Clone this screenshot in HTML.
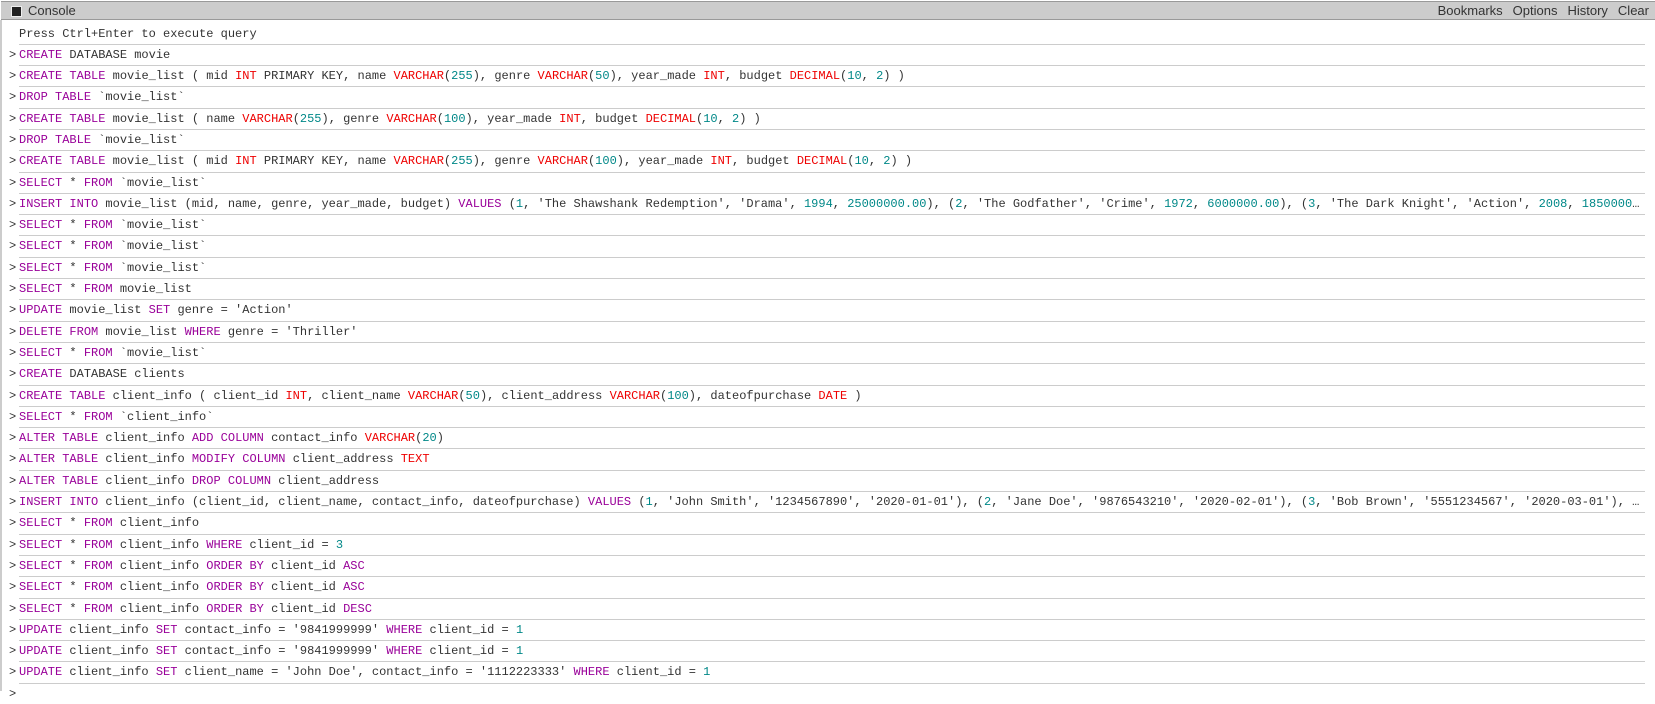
<!DOCTYPE html>
<html><head><meta charset="utf-8"><style>
body{margin:0;width:1655px;height:691px;overflow:hidden;background:#fff;font-family:"Liberation Mono",monospace;}
#bar{position:absolute;left:1px;top:1px;width:1654px;height:17px;background:#ccc;border-top:1px solid #999;border-bottom:1px solid #999;font-family:"Liberation Sans",Arial,sans-serif;font-size:13px;color:#333;}
#bar .ic{position:absolute;left:10px;top:4px;width:9px;height:9px;background:#222;border:1px solid #eee;}
#bar .t{position:absolute;left:27px;top:1px;}
#bar .r{position:absolute;right:6px;top:1px;}
#bar .r span{margin-left:10px;}
#lb{position:absolute;left:0;top:20px;width:2px;height:671px;background:#ccc;}
#rows{position:absolute;left:19px;top:23.5px;width:1626px;}
.row{position:relative;height:20.3px;border-bottom:1px solid #ccc;font-size:12px;line-height:20.3px;color:#333;white-space:pre;}
.row.p:before{content:">";position:absolute;left:-10px;}
.row .in{display:block;overflow:hidden;text-overflow:ellipsis;white-space:pre}
.k{color:#990099}.y{color:#ee0000}.n{color:#008888}
</style></head><body>
<div id="bar"><div class="ic"></div><span class="t">Console</span><span class="r"><span>Bookmarks</span><span>Options</span><span>History</span><span>Clear</span></span></div>
<div id="lb"></div>
<div id="rows">
<div class="row"><span class="in">Press Ctrl+Enter to execute query</span></div>
<div class="row p"><span class="in"><span class="k">CREATE</span> DATABASE movie</span></div>
<div class="row p"><span class="in"><span class="k">CREATE</span> <span class="k">TABLE</span> movie_list ( mid <span class="y">INT</span> PRIMARY KEY, name <span class="y">VARCHAR</span>(<span class="n">255</span>), genre <span class="y">VARCHAR</span>(<span class="n">50</span>), year_made <span class="y">INT</span>, budget <span class="y">DECIMAL</span>(<span class="n">10</span>, <span class="n">2</span>) )</span></div>
<div class="row p"><span class="in"><span class="k">DROP</span> <span class="k">TABLE</span> `movie_list`</span></div>
<div class="row p"><span class="in"><span class="k">CREATE</span> <span class="k">TABLE</span> movie_list ( name <span class="y">VARCHAR</span>(<span class="n">255</span>), genre <span class="y">VARCHAR</span>(<span class="n">100</span>), year_made <span class="y">INT</span>, budget <span class="y">DECIMAL</span>(<span class="n">10</span>, <span class="n">2</span>) )</span></div>
<div class="row p"><span class="in"><span class="k">DROP</span> <span class="k">TABLE</span> `movie_list`</span></div>
<div class="row p"><span class="in"><span class="k">CREATE</span> <span class="k">TABLE</span> movie_list ( mid <span class="y">INT</span> PRIMARY KEY, name <span class="y">VARCHAR</span>(<span class="n">255</span>), genre <span class="y">VARCHAR</span>(<span class="n">100</span>), year_made <span class="y">INT</span>, budget <span class="y">DECIMAL</span>(<span class="n">10</span>, <span class="n">2</span>) )</span></div>
<div class="row p"><span class="in"><span class="k">SELECT</span> * <span class="k">FROM</span> `movie_list`</span></div>
<div class="row p"><span class="in"><span class="k">INSERT</span> <span class="k">INTO</span> movie_list (mid, name, genre, year_made, budget) <span class="k">VALUES</span> (<span class="n">1</span>, 'The Shawshank Redemption', 'Drama', <span class="n">1994</span>, <span class="n">25000000.00</span>), (<span class="n">2</span>, 'The Godfather', 'Crime', <span class="n">1972</span>, <span class="n">6000000.00</span>), (<span class="n">3</span>, 'The Dark Knight', 'Action', <span class="n">2008</span>, <span class="n">185000000.00</span>)</span></div>
<div class="row p"><span class="in"><span class="k">SELECT</span> * <span class="k">FROM</span> `movie_list`</span></div>
<div class="row p"><span class="in"><span class="k">SELECT</span> * <span class="k">FROM</span> `movie_list`</span></div>
<div class="row p"><span class="in"><span class="k">SELECT</span> * <span class="k">FROM</span> `movie_list`</span></div>
<div class="row p"><span class="in"><span class="k">SELECT</span> * <span class="k">FROM</span> movie_list</span></div>
<div class="row p"><span class="in"><span class="k">UPDATE</span> movie_list <span class="k">SET</span> genre = 'Action'</span></div>
<div class="row p"><span class="in"><span class="k">DELETE</span> <span class="k">FROM</span> movie_list <span class="k">WHERE</span> genre = 'Thriller'</span></div>
<div class="row p"><span class="in"><span class="k">SELECT</span> * <span class="k">FROM</span> `movie_list`</span></div>
<div class="row p"><span class="in"><span class="k">CREATE</span> DATABASE clients</span></div>
<div class="row p"><span class="in"><span class="k">CREATE</span> <span class="k">TABLE</span> client_info ( client_id <span class="y">INT</span>, client_name <span class="y">VARCHAR</span>(<span class="n">50</span>), client_address <span class="y">VARCHAR</span>(<span class="n">100</span>), dateofpurchase <span class="y">DATE</span> )</span></div>
<div class="row p"><span class="in"><span class="k">SELECT</span> * <span class="k">FROM</span> `client_info`</span></div>
<div class="row p"><span class="in"><span class="k">ALTER</span> <span class="k">TABLE</span> client_info <span class="k">ADD</span> <span class="k">COLUMN</span> contact_info <span class="y">VARCHAR</span>(<span class="n">20</span>)</span></div>
<div class="row p"><span class="in"><span class="k">ALTER</span> <span class="k">TABLE</span> client_info <span class="k">MODIFY</span> <span class="k">COLUMN</span> client_address <span class="y">TEXT</span></span></div>
<div class="row p"><span class="in"><span class="k">ALTER</span> <span class="k">TABLE</span> client_info <span class="k">DROP</span> <span class="k">COLUMN</span> client_address</span></div>
<div class="row p"><span class="in"><span class="k">INSERT</span> <span class="k">INTO</span> client_info (client_id, client_name, contact_info, dateofpurchase) <span class="k">VALUES</span> (<span class="n">1</span>, 'John Smith', '1234567890', '2020-01-01'), (<span class="n">2</span>, 'Jane Doe', '9876543210', '2020-02-01'), (<span class="n">3</span>, 'Bob Brown', '5551234567', '2020-03-01'), (<span class="n">4</span>, 'x')</span></div>
<div class="row p"><span class="in"><span class="k">SELECT</span> * <span class="k">FROM</span> client_info</span></div>
<div class="row p"><span class="in"><span class="k">SELECT</span> * <span class="k">FROM</span> client_info <span class="k">WHERE</span> client_id = <span class="n">3</span></span></div>
<div class="row p"><span class="in"><span class="k">SELECT</span> * <span class="k">FROM</span> client_info <span class="k">ORDER BY</span> client_id <span class="k">ASC</span></span></div>
<div class="row p"><span class="in"><span class="k">SELECT</span> * <span class="k">FROM</span> client_info <span class="k">ORDER BY</span> client_id <span class="k">ASC</span></span></div>
<div class="row p"><span class="in"><span class="k">SELECT</span> * <span class="k">FROM</span> client_info <span class="k">ORDER BY</span> client_id <span class="k">DESC</span></span></div>
<div class="row p"><span class="in"><span class="k">UPDATE</span> client_info <span class="k">SET</span> contact_info = '9841999999' <span class="k">WHERE</span> client_id = <span class="n">1</span></span></div>
<div class="row p"><span class="in"><span class="k">UPDATE</span> client_info <span class="k">SET</span> contact_info = '9841999999' <span class="k">WHERE</span> client_id = <span class="n">1</span></span></div>
<div class="row p"><span class="in"><span class="k">UPDATE</span> client_info <span class="k">SET</span> client_name = 'John Doe', contact_info = '1112223333' <span class="k">WHERE</span> client_id = <span class="n">1</span></span></div>
<div class="row p" style="border-bottom:none"><span class="in"> </span></div>
</div>
</body></html>
